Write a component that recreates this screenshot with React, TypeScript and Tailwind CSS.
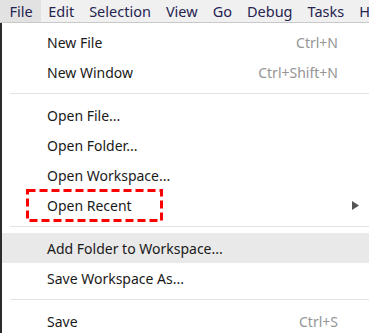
import React from 'react';

type Item = { label: string; shortcut?: string; submenu?: boolean; active?: boolean; marked?: boolean } | 'sep';

const menus = ['File', 'Edit', 'Selection', 'View', 'Go', 'Debug', 'Tasks', 'Help'];

const items: Item[] = [
  { label: 'New File', shortcut: 'Ctrl+N' },
  { label: 'New Window', shortcut: 'Ctrl+Shift+N' },
  'sep',
  { label: 'Open File...' },
  { label: 'Open Folder...' },
  { label: 'Open Workspace...' },
  { label: 'Open Recent', submenu: true, marked: true },
  'sep',
  { label: 'Add Folder to Workspace...', active: true },
  { label: 'Save Workspace As...' },
  'sep',
  { label: 'Save', shortcut: 'Ctrl+S' },
];

export default function App() {
  return (
    <div
      className="w-[369px] h-[333px] overflow-hidden bg-white text-[14px]"
      style={{ fontFamily: '"Noto Sans", "Open Sans", sans-serif' }}
    >
      {/* menubar */}
      <div className="flex h-[23px] pl-[2px] bg-[#f0f0f0] border-b border-[#c8c8c8] whitespace-nowrap overflow-hidden">
        {menus.map((m, i) => (
          <div
            key={m}
            className={`shrink-0 px-[7.5px] text-[14.5px] leading-[23px] text-[#262450] ${i === 0 ? 'bg-[#e2e2e2] -ml-[2px] pl-[9.5px] pr-[8px]' : ''}`}
          >
            {m}
          </div>
        ))}
      </div>

      {/* dropdown */}
      <div className="relative border-l-2 border-[#2b2b2b] pt-[4px] h-[310px]">
        {items.map((it, i) =>
          it === 'sep' ? (
            <div key={i} className="mt-[6px] mb-[6px] ml-[8px] h-px bg-[#e3e3e3]" />
          ) : (
            <div
              key={i}
              className={`relative flex items-center h-[30px] pl-[45px] pr-[31px] ${it.active ? 'bg-[#e9e9e9]' : ''}`}
            >
              <span className="text-[#1a1a1a]">{it.label}</span>
              <span className="ml-auto text-[#959595]">{it.shortcut}</span>
              {it.submenu && (
                <svg className="absolute right-[10px] top-[11px]" width="7" height="9" viewBox="0 0 7 9">
                  <path d="M0 0 L7 4.5 L0 9 Z" fill="#555" />
                </svg>
              )}
              {it.marked && (
                <svg className="absolute left-[24px] top-[-1px]" width="137" height="33" viewBox="0 0 137 33">
                  <rect x="1.5" y="1.5" width="134" height="30" fill="none" stroke="#ff0000" strokeWidth="3" strokeDasharray="8 4" />
                </svg>
              )}
            </div>
          )
        )}
      </div>
    </div>
  );
}
